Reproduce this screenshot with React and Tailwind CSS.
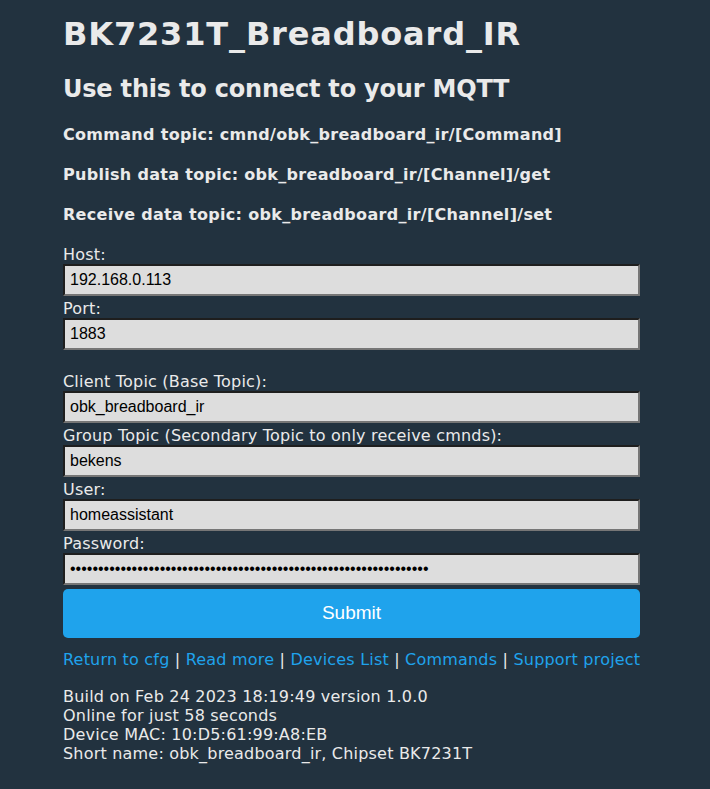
import { useState } from "react";

const fields = [
  { id: "host", label: "Host:", value: "192.168.0.113" },
  { id: "port", label: "Port:", value: "1883", gap: "mb-[23px]" },
  { id: "client", label: "Client Topic (Base Topic):", value: "obk_breadboard_ir" },
  { id: "group", label: "Group Topic (Secondary Topic to only receive cmnds):", value: "bekens" },
  { id: "user", label: "User:", value: "homeassistant" },
  { id: "password", label: "Password:", value: "x".repeat(64), type: "password", gap: "mb-0" },
];

const links = ["Return to cfg", "Read more", "Devices List", "Commands", "Support project"];

function Field({ id, label, value, type, onChange }) {
  return (
    <div className="flex flex-col">
      <label htmlFor={id} className="h-[18px] whitespace-nowrap text-[16px] leading-[18px]">
        {label}
      </label>
      <input
        id={id}
        type={type || "text"}
        value={value}
        onChange={onChange}
        className="h-[32px] w-full border-2 border-t-[#1e1e1e] border-l-[#1e1e1e] border-r-[#767676] border-b-[#767676] bg-[#dddddd] pl-[5px] font-['Liberation_Sans',Arial,sans-serif] text-[16px] tracking-normal text-black outline-none"
      />
    </div>
  );
}

export default function App() {
  const [data, setData] = useState(
    Object.fromEntries(fields.map((f) => [f.id, f.value]))
  );

  function onChange(e) {
    setData((prev) => ({ ...prev, [e.target.id]: e.target.value }));
  }

  return (
    <div className="min-h-[789px] w-full bg-[#22323f] font-['DejaVu_Sans',Verdana,sans-serif] tracking-[0.2px] text-[#eaeaea]">
      <div className="ml-[63px] w-[577px] pt-[14px]">
        <h1 className="h-[40px] whitespace-nowrap text-[32px] font-bold leading-[40px] tracking-[0.85px]">
          BK7231T_Breadboard_IR
        </h1>
        <h3 className="mt-[20px] h-[30px] whitespace-nowrap text-[24px] font-bold leading-[30px] tracking-[-0.2px]">
          Use this to connect to your MQTT
        </h3>
        <div className="mt-[21px] flex flex-col gap-[20px] text-[16px] font-bold leading-[20px] tracking-[0.3px]">
          <p className="whitespace-nowrap">Command topic: cmnd/obk_breadboard_ir/[Command]</p>
          <p className="whitespace-nowrap">Publish data topic: obk_breadboard_ir/[Channel]/get</p>
          <p className="whitespace-nowrap">Receive data topic: obk_breadboard_ir/[Channel]/set</p>
        </div>

        <form className="mt-[21px] flex flex-col" onSubmit={(e) => e.preventDefault()}>
          {fields.map((f) => (
            <div key={f.id} className={f.gap || "mb-[4px]"}>
              <Field
                id={f.id}
                label={f.label}
                type={f.type}
                value={data[f.id]}
                onChange={onChange}
              />
            </div>
          ))}
          <button
            type="submit"
            className="mt-[4px] flex h-[49px] w-full items-center justify-center rounded-[5px] bg-[#1fa3ec] font-['Liberation_Sans',Arial,sans-serif] text-[19px] tracking-normal text-white"
          >
            Submit
          </button>
        </form>

        <div className="mt-[12px] h-[19px] whitespace-nowrap text-[16px] leading-[19px]">
          {links.map((l, i) => (
            <span key={l}>
              {i > 0 && " | "}
              <a href="#" className="text-[#1fa3ec]">
                {l}
              </a>
            </span>
          ))}
        </div>

        <div className="mt-[18px] text-[16px] leading-[19px]">
          <div>Build on Feb 24 2023 18:19:49 version 1.0.0</div>
          <div>Online for just 58 seconds</div>
          <div>Device MAC: 10:D5:61:99:A8:EB</div>
          <div>Short name: obk_breadboard_ir, Chipset BK7231T</div>
        </div>
      </div>
    </div>
  );
}
